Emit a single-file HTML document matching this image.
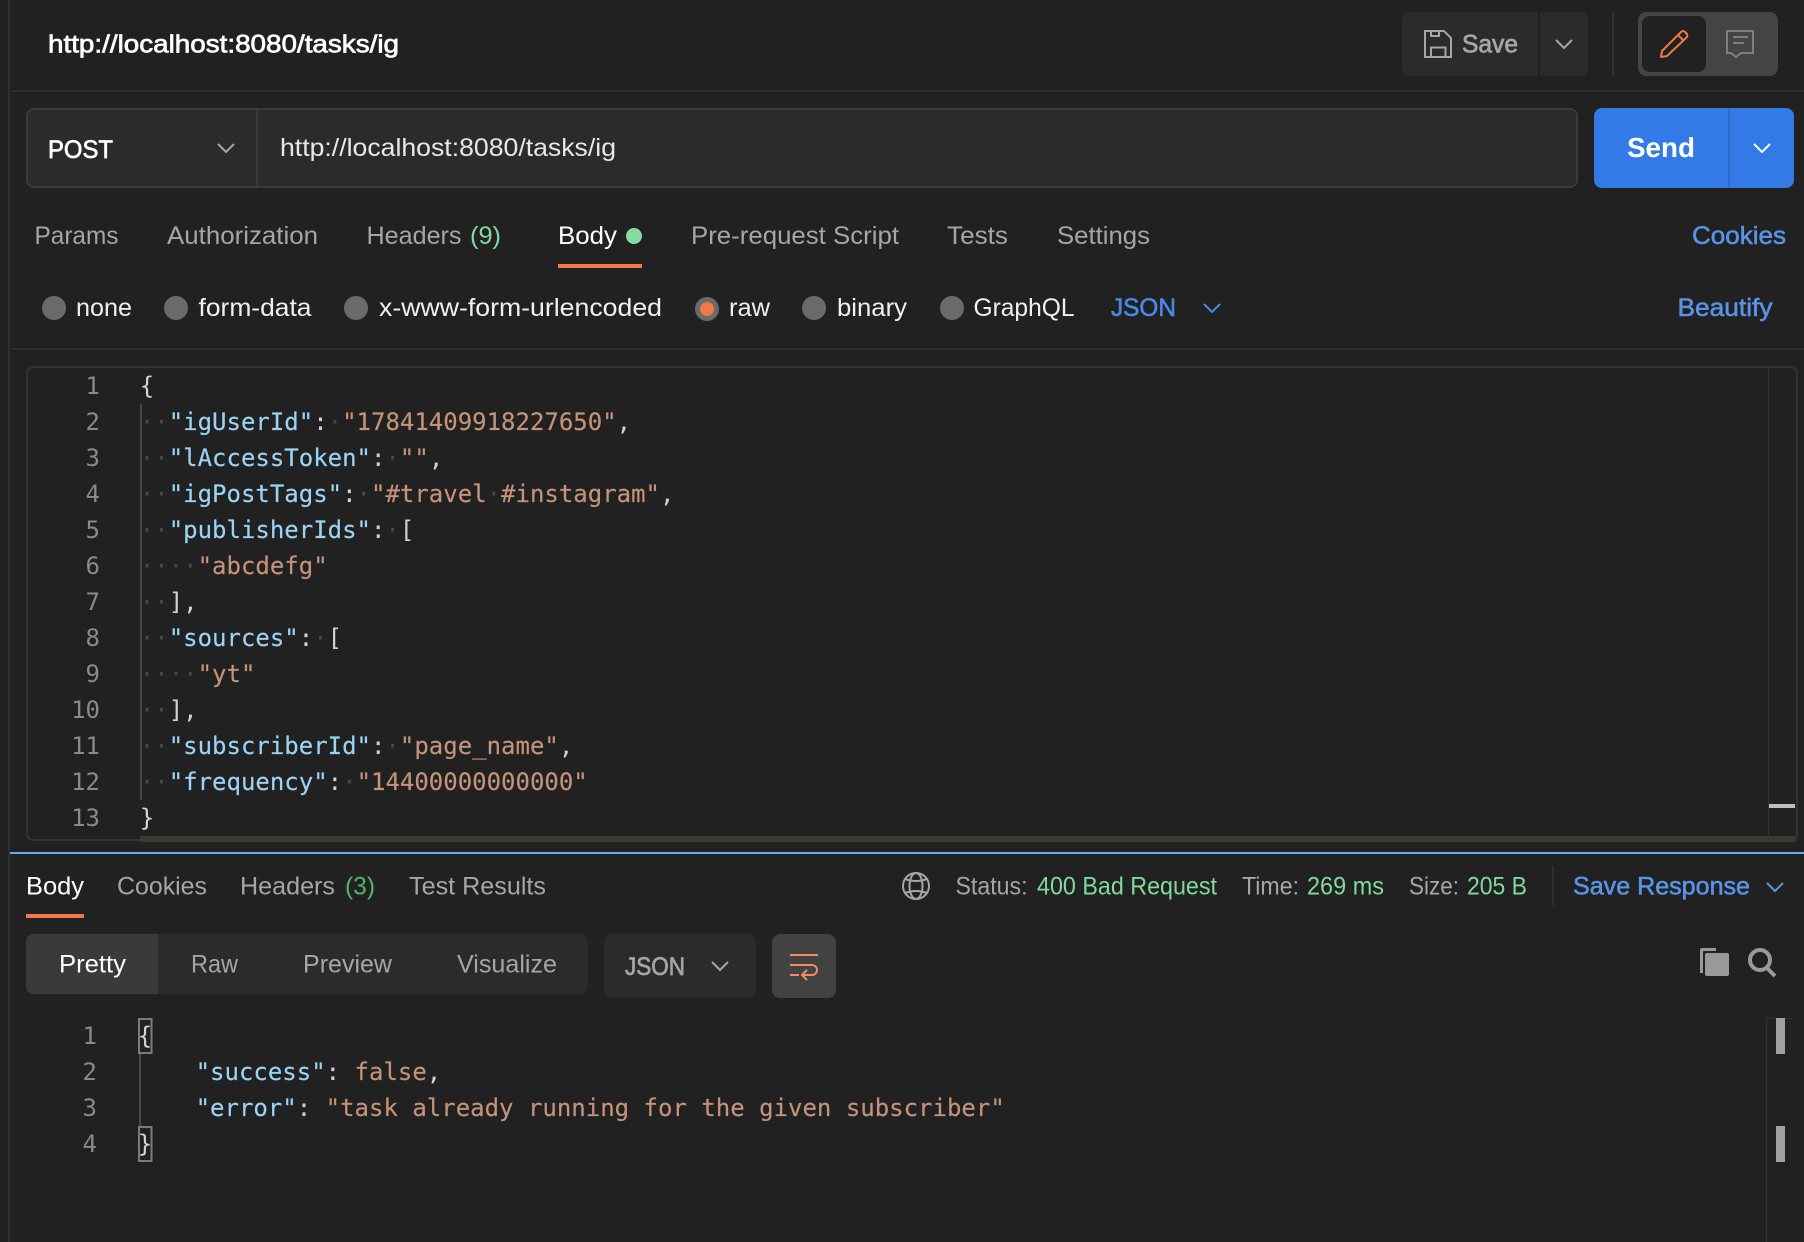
<!DOCTYPE html>
<html lang="en">
<head>
<meta charset="utf-8">
<title>Postman request</title>
<style>
html,body{margin:0;padding:0;background:#212121;width:1804px;height:1242px;overflow:hidden}
svg{display:block}
text{white-space:pre}
.s{font-family:"Liberation Sans",sans-serif;font-size:25px}
.m{stroke-width:.55px}
.b{stroke-width:.7px}
.c{font-family:"DejaVu Sans Mono",monospace;font-size:24px;fill:#d4d4d4}
.n{fill:#8a8a8a;text-anchor:end}
.k{fill:#9cd3f5;stroke:#9cd3f5;stroke-width:.15px}.v{fill:#c4937a;stroke:#c4937a;stroke-width:.15px}.d{fill:#484848}
</style>
</head>
<body>
<svg width="1804" height="1242" viewBox="0 0 1804 1242" xmlns="http://www.w3.org/2000/svg">
<rect width="1804" height="1242" fill="#212121"/>
<rect x="8" y="0" width="2" height="1242" fill="#2f2f2f"/>
<rect x="10" y="90" width="1794" height="2" fill="#2d2d2d"/>
<rect x="10" y="348" width="1794" height="2" fill="#2d2d2d"/>

<!-- title -->
<text class="s b" x="48" y="52.500" textLength="351" lengthAdjust="spacingAndGlyphs" fill="#fff" stroke="#fff">http://localhost:8080/tasks/ig</text>

<!-- save -->
<rect x="1402" y="12" width="136" height="64" rx="8" fill="#2b2b2b"/>
<rect x="1540" y="12" width="48" height="64" rx="8" fill="#2b2b2b"/>
<rect x="1540" y="12" width="10" height="64" fill="#2b2b2b"/>
<rect x="1528" y="12" width="10" height="64" fill="#2b2b2b"/>
<g fill="none" stroke="#a6a6a6" stroke-width="2">
<path d="M1425 31H1444L1451 38V57H1425Z"/>
<path d="M1431 31V36H1439V31"/>
<path d="M1431 57V47.500H1445.500V57"/>
</g>
<text class="s b" x="1462" y="52.500" textLength="56" lengthAdjust="spacingAndGlyphs" fill="#a6a6a6" stroke="#a6a6a6">Save</text>
<path d="M1556 40L1564 48L1572 40" fill="none" stroke="#a6a6a6" stroke-width="2"/>
<rect x="1612" y="12" width="2" height="64" fill="#303030"/>
<rect x="1638" y="12" width="140" height="64" rx="8" fill="#444"/>
<rect x="1642" y="16" width="64" height="56" rx="8" fill="#212121"/>
<g fill="none" stroke="#f0784a" stroke-width="2" stroke-linejoin="round">
<path d="M1661 57L1662 51L1681 32Q1683 30 1685 32L1687 34Q1688 36 1686 38L1667 56Z"/>
<path d="M1678 35L1684 41"/>
</g>
<g fill="none" stroke="#7f7f7f" stroke-width="2">
<path d="M1727 31H1753V53H1741L1736 57L1731 53H1727Z"/>
<path d="M1733 37H1748M1733 43H1744"/>
</g>

<!-- url bar -->
<rect x="27" y="109" width="1550" height="78" rx="7" fill="#2b2b2b" stroke="#3a3a3a" stroke-width="2"/>
<rect x="256" y="109" width="2" height="78" fill="#3a3a3a"/>
<text class="s b" x="48" y="158" textLength="65" lengthAdjust="spacingAndGlyphs" fill="#fff" stroke="#fff">POST</text>
<path d="M218 144L226 152L234 144" fill="none" stroke="#a6a6a6" stroke-width="2"/>
<text class="s" x="280" y="156" textLength="336" lengthAdjust="spacingAndGlyphs" fill="#e8e8e8">http://localhost:8080/tasks/ig</text>

<!-- send -->
<rect x="1594" y="108" width="200" height="80" rx="8" fill="#347ae6"/>
<rect x="1728" y="108" width="2" height="80" fill="#2f6cc9"/>
<text class="s" x="1627" y="157" font-weight="700" style="font-size:28px" textLength="68" lengthAdjust="spacingAndGlyphs" fill="#fff">Send</text>
<path d="M1754 144L1762 152L1770 144" fill="none" stroke="#fff" stroke-width="2"/>

<!-- request tabs -->
<g fill="#a6a6a6">
<text class="s" x="34.500" y="244" textLength="84" lengthAdjust="spacingAndGlyphs">Params</text>
<text class="s" x="167" y="244" textLength="151" lengthAdjust="spacingAndGlyphs">Authorization</text>
<text class="s" x="366.500" y="244" textLength="95" lengthAdjust="spacingAndGlyphs">Headers</text>
<text class="s" x="470" y="244" textLength="31" lengthAdjust="spacingAndGlyphs" fill="#81d99f">(9)</text>
<text class="s" x="558" y="244" textLength="59" lengthAdjust="spacingAndGlyphs" fill="#fff">Body</text>
<text class="s" x="691" y="244" textLength="208" lengthAdjust="spacingAndGlyphs">Pre-request Script</text>
<text class="s" x="947" y="244" textLength="61" lengthAdjust="spacingAndGlyphs">Tests</text>
<text class="s" x="1057" y="244" textLength="93" lengthAdjust="spacingAndGlyphs">Settings</text>
</g>
<circle cx="634" cy="236" r="8" fill="#87dba2"/>
<rect x="558" y="264" width="84" height="4" fill="#f0784a"/>
<text class="s m" x="1692" y="244" textLength="94" lengthAdjust="spacingAndGlyphs" fill="#5a93e6" stroke="#5a93e6">Cookies</text>

<!-- body type -->
<g fill="#6b6b6b">
<circle cx="54" cy="308" r="12"/>
<circle cx="176" cy="308" r="12"/>
<circle cx="356" cy="308" r="12"/>
<circle cx="707" cy="309" r="12"/>
<circle cx="814" cy="308" r="12"/>
<circle cx="952" cy="308" r="12"/>
</g>
<circle cx="707" cy="309" r="7" fill="#f0784a"/>
<g fill="#f0f0f0">
<text class="s" x="76" y="316" textLength="56" lengthAdjust="spacingAndGlyphs">none</text>
<text class="s" x="198.500" y="316" textLength="113" lengthAdjust="spacingAndGlyphs">form-data</text>
<text class="s" x="379" y="316" textLength="283" lengthAdjust="spacingAndGlyphs">x-www-form-urlencoded</text>
<text class="s" x="729" y="316" textLength="41" lengthAdjust="spacingAndGlyphs">raw</text>
<text class="s" x="837" y="316" textLength="70" lengthAdjust="spacingAndGlyphs">binary</text>
<text class="s" x="973.500" y="316" textLength="101" lengthAdjust="spacingAndGlyphs">GraphQL</text>
</g>
<text class="s m" x="1111" y="316" textLength="65" lengthAdjust="spacingAndGlyphs" fill="#4a8ae6" stroke="#4a8ae6">JSON</text>
<path d="M1204 304L1212 312L1220 304" fill="none" stroke="#4a8ae6" stroke-width="2"/>
<text class="s m" x="1677.500" y="316" textLength="95" lengthAdjust="spacingAndGlyphs" fill="#5a93e6" stroke="#5a93e6">Beautify</text>

<!-- editor -->
<path d="M1797 840H34Q27 840 27 833V374Q27 367 34 367H1790Q1797 367 1797 374V833Q1797 840 1790 840" fill="none" stroke="#333" stroke-width="2"/>
<rect x="140" y="836" width="1656" height="6" fill="#3a3a34"/>
<rect x="1768" y="368" width="1" height="472" fill="#333"/>
<rect x="1769" y="804" width="26" height="4" fill="#bdbdbd"/>
<rect x="140" y="404" width="2" height="396" fill="#444"/>

<g class="c">
<text class="c n" x="100" y="394">1</text>
<text class="c n" x="100" y="430">2</text>
<text class="c n" x="100" y="466">3</text>
<text class="c n" x="100" y="502">4</text>
<text class="c n" x="100" y="538">5</text>
<text class="c n" x="100" y="574">6</text>
<text class="c n" x="100" y="610">7</text>
<text class="c n" x="100" y="646">8</text>
<text class="c n" x="100" y="682">9</text>
<text class="c n" x="100" y="718">10</text>
<text class="c n" x="100" y="754">11</text>
<text class="c n" x="100" y="790">12</text>
<text class="c n" x="100" y="826">13</text>

<text class="c" x="139.800" y="394">{</text>
<text class="c" x="139.800" y="430"><tspan class="d">··</tspan><tspan class="k">"igUserId"</tspan>:<tspan class="d">·</tspan><tspan class="v">"17841409918227650"</tspan>,</text>
<text class="c" x="139.800" y="466"><tspan class="d">··</tspan><tspan class="k">"lAccessToken"</tspan>:<tspan class="d">·</tspan><tspan class="v">""</tspan>,</text>
<text class="c" x="139.800" y="502"><tspan class="d">··</tspan><tspan class="k">"igPostTags"</tspan>:<tspan class="d">·</tspan><tspan class="v">"#travel</tspan><tspan class="d">·</tspan><tspan class="v">#instagram"</tspan>,</text>
<text class="c" x="139.800" y="538"><tspan class="d">··</tspan><tspan class="k">"publisherIds"</tspan>:<tspan class="d">·</tspan>[</text>
<text class="c" x="139.800" y="574"><tspan class="d">····</tspan><tspan class="v">"abcdefg"</tspan></text>
<text class="c" x="139.800" y="610"><tspan class="d">··</tspan>],</text>
<text class="c" x="139.800" y="646"><tspan class="d">··</tspan><tspan class="k">"sources"</tspan>:<tspan class="d">·</tspan>[</text>
<text class="c" x="139.800" y="682"><tspan class="d">····</tspan><tspan class="v">"yt"</tspan></text>
<text class="c" x="139.800" y="718"><tspan class="d">··</tspan>],</text>
<text class="c" x="139.800" y="754"><tspan class="d">··</tspan><tspan class="k">"subscriberId"</tspan>:<tspan class="d">·</tspan><tspan class="v">"page_name"</tspan>,</text>
<text class="c" x="139.800" y="790"><tspan class="d">··</tspan><tspan class="k">"frequency"</tspan>:<tspan class="d">·</tspan><tspan class="v">"14400000000000"</tspan></text>
<text class="c" x="139.800" y="826">}</text>
</g>

<!-- splitter -->
<rect x="10" y="852" width="1794" height="2" fill="#6ea6ef"/>

<!-- response tabs -->
<g fill="#a6a6a6">
<text class="s" x="26" y="894.500" textLength="58" lengthAdjust="spacingAndGlyphs" fill="#fff">Body</text>
<text class="s" x="117" y="894.500" textLength="90" lengthAdjust="spacingAndGlyphs">Cookies</text>
<text class="s" x="240" y="894.500" textLength="95" lengthAdjust="spacingAndGlyphs">Headers</text>
<text class="s" x="345" y="894.500" textLength="30" lengthAdjust="spacingAndGlyphs" fill="#4fb56c">(3)</text>
<text class="s" x="409" y="894.500" textLength="137" lengthAdjust="spacingAndGlyphs">Test Results</text>
</g>
<rect x="26" y="914" width="58" height="4" fill="#f0784a"/>

<!-- status -->
<g fill="none" stroke="#a6a6a6" stroke-width="2">
<circle cx="916" cy="886" r="13"/>
<ellipse cx="916" cy="886" rx="6.500" ry="13"/>
<path d="M905 879Q916 883 927 879M905 893Q916 889 927 893"/>
</g>
<text class="s" x="955.500" y="894.500" textLength="72" lengthAdjust="spacingAndGlyphs" fill="#a6a6a6">Status:</text>
<text class="s" x="1037" y="894.500" textLength="180" lengthAdjust="spacingAndGlyphs" fill="#81d99f">400 Bad Request</text>
<text class="s" x="1242" y="894.500" textLength="57" lengthAdjust="spacingAndGlyphs" fill="#a6a6a6">Time:</text>
<text class="s" x="1307" y="894.500" textLength="77" lengthAdjust="spacingAndGlyphs" fill="#81d99f">269 ms</text>
<text class="s" x="1409" y="894.500" textLength="50" lengthAdjust="spacingAndGlyphs" fill="#a6a6a6">Size:</text>
<text class="s" x="1467" y="894.500" textLength="60" lengthAdjust="spacingAndGlyphs" fill="#81d99f">205 B</text>
<rect x="1552" y="866" width="2" height="40" fill="#303030"/>
<text class="s m" x="1573" y="894.500" textLength="177" lengthAdjust="spacingAndGlyphs" fill="#5a93e6" stroke="#5a93e6">Save Response</text>
<path d="M1767 883L1775 891L1783 883" fill="none" stroke="#5a93e6" stroke-width="2"/>

<!-- response controls -->
<rect x="26" y="934" width="562" height="60" rx="8" fill="#2b2b2b"/>
<path d="M158 934H34Q26 934 26 942V986Q26 994 34 994H158Z" fill="#3a3a3a"/>
<text class="s" x="59" y="972.500" textLength="67" lengthAdjust="spacingAndGlyphs" fill="#fff">Pretty</text>
<text class="s" x="191" y="972.500" textLength="47" lengthAdjust="spacingAndGlyphs" fill="#a6a6a6">Raw</text>
<text class="s" x="303" y="972.500" textLength="89" lengthAdjust="spacingAndGlyphs" fill="#a6a6a6">Preview</text>
<text class="s" x="457" y="972.500" textLength="100" lengthAdjust="spacingAndGlyphs" fill="#a6a6a6">Visualize</text>
<rect x="604" y="934" width="152" height="64" rx="8" fill="#2b2b2b"/>
<text class="s b" x="625" y="975" textLength="60" lengthAdjust="spacingAndGlyphs" fill="#a6a6a6" stroke="#a6a6a6">JSON</text>
<path d="M712 962L720 970L728 962" fill="none" stroke="#a6a6a6" stroke-width="2"/>
<rect x="772" y="934" width="64" height="64" rx="8" fill="#424242"/>
<g fill="none" stroke="#f48b60" stroke-width="2">
<path d="M790 955H818M790 965H812A5 5 0 0 1 812 975H803M790 975H799"/>
<path d="M807 970L802 975L807 980"/>
</g>

<!-- copy & search -->
<path d="M1703 973H1700V950Q1700 948 1702 948H1716V951H1703Z" fill="#9a9a9a"/>
<rect x="1705" y="953" width="24" height="23" rx="2" fill="#9a9a9a"/>
<g fill="none" stroke="#9a9a9a" stroke-width="4">
<circle cx="1760" cy="960" r="10"/>
<path d="M1767 968L1775 976"/>
</g>

<!-- response code -->
<rect x="1766" y="1018" width="1" height="224" fill="#333"/>
<rect x="1766" y="1018" width="28" height="1" fill="#333"/>
<rect x="1776" y="1018" width="9" height="36" fill="#a0a0a0"/>
<rect x="1776" y="1126" width="9" height="36" fill="#a0a0a0"/>
<rect x="139" y="1053" width="2" height="74" fill="#4a4a4a"/>
<rect x="139" y="1019" width="12.500" height="34" fill="none" stroke="#7c7c7c" stroke-width="2"/>
<rect x="139" y="1127" width="12.500" height="34" fill="none" stroke="#7c7c7c" stroke-width="2"/>
<text class="c n" x="97" y="1044">1</text>
<text class="c n" x="97" y="1080">2</text>
<text class="c n" x="97" y="1116">3</text>
<text class="c n" x="97" y="1152">4</text>
<text class="c" x="137.800" y="1044">{</text>
<text class="c" x="137.800" y="1080">    <tspan class="k">"success"</tspan>: <tspan class="v">false</tspan>,</text>
<text class="c" x="137.800" y="1116">    <tspan class="k">"error"</tspan>: <tspan class="v">"task already running for the given subscriber"</tspan></text>
<text class="c" x="137.800" y="1152">}</text>
</svg>
</body>
</html>
